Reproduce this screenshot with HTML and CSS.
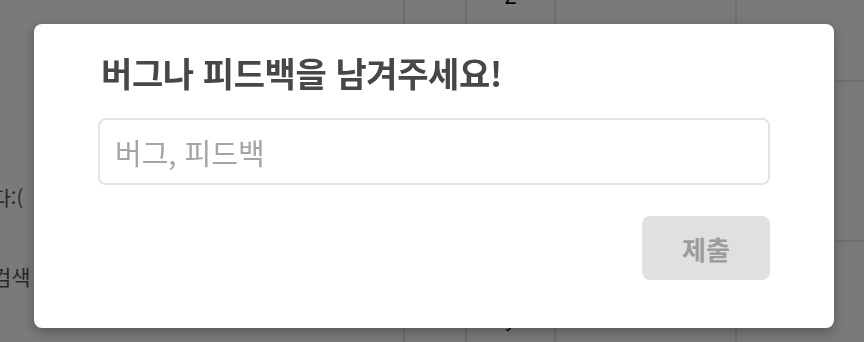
FILE: index.html
```html
<!DOCTYPE html>
<html lang="ko">
<head>
<meta charset="utf-8">
<link rel="stylesheet" href="styles.css">
</head>
<body>
<div class="page">
  <div class="side">
    <p class="side-line side-a">니다:(</p>
    <p class="side-line side-b">검색</p>
  </div>
  <div class="table">
    <div class="row row-top">
      <div class="cell c1"></div>
      <div class="cell c2"><span class="num">2</span></div>
      <div class="cell c3"></div>
      <div class="cell c4"></div>
    </div>
    <div class="row row-mid">
      <div class="cell c1"></div>
      <div class="cell c2"></div>
      <div class="cell c3"></div>
      <div class="cell c4"></div>
    </div>
    <div class="row row-bot">
      <div class="cell c1"></div>
      <div class="cell c2"><span class="dot">y</span></div>
      <div class="cell c3"></div>
      <div class="cell c4"></div>
    </div>
  </div>
</div>

<div class="overlay">
  <div class="modal">
    <h2 class="modal-title">버그나 피드백을 남겨주세요!</h2>
    <input class="feedback-input" type="text" placeholder="버그, 피드백">
    <div class="actions">
      <button class="submit" type="button">제출</button>
    </div>
  </div>
</div>
</body>
</html>
```

FILE: styles.css
```css
* { box-sizing: border-box; }
html, body { margin: 0; padding: 0; }
body {
  width: 864px;
  height: 342px;
  overflow: hidden;
  background: #ffffff;
  font-family: "Noto Sans CJK KR", "Noto Sans", sans-serif;
}

.page {
  display: flex;
  height: 342px;
}
.side {
  width: 429px;
  flex-shrink: 0;
  display: flex;
  flex-direction: column;
  margin-left: -26px;
}
.side-line {
  margin: 0;
  color: #555;
  font-size: 20px;
  line-height: 28px;
}
.side-a { margin-top: 184px; }
.side-b {
  margin-top: 50px;
  padding-left: 18px;
  font-size: 21px;
}

.table {
  flex: 1;
  display: flex;
  flex-direction: column;
}
.row {
  display: flex;
  border-bottom: 2px solid #e6e6e6;
}
.row-top { height: 82px; }
.row-mid { height: 160px; }
.row-bot { height: 100px; border-bottom: 0; }
.cell {
  border-left: 2px solid #e6e6e6;
  display: flex;
  justify-content: center;
}
.c1 { width: 62px; }
.c2 { width: 89px; }
.c3 { width: 181px; }
.c4 { flex: 1; }
.num {
  font-family: "Liberation Sans", sans-serif;
  font-size: 22px;
  color: #000;
  margin-top: -15px;
  line-height: 24px;
}
.dot {
  font-family: "Liberation Sans", sans-serif;
  font-size: 20px;
  color: #000;
  margin-top: 68px;
  line-height: 20px;
}

.overlay {
  position: fixed;
  inset: 0;
  background: rgba(0, 0, 0, 0.52);
  display: flex;
  align-items: flex-start;
  justify-content: flex-start;
  padding: 24px 0 0 34px;
}
.modal {
  width: 800px;
  height: 304px;
  background: #ffffff;
  border-radius: 8px;
  box-shadow: 0 4px 14px rgba(0, 0, 0, 0.3);
  padding: 24px 64px 48px;
  display: flex;
  flex-direction: column;
}
.modal-title {
  margin: 0 0 0 3px;
  font-size: 34px;
  line-height: 50px;
  font-weight: 700;
  color: #474747;
  letter-spacing: -0.4px;
}
.feedback-input {
  margin-top: 20px;
  width: 672px;
  height: 67px;
  border: 2px solid #e2e2e4;
  border-radius: 8px;
  padding: 0 15px;
  font-family: "Noto Sans CJK KR", "Noto Sans", sans-serif;
  font-size: 29px;
  color: #333;
  outline: none;
}
.feedback-input::placeholder {
  color: #a4a4a4;
  font-weight: 400;
}
.actions {
  margin-top: 31px;
  display: flex;
  justify-content: flex-end;
}
.submit {
  width: 128px;
  height: 64px;
  border: 0;
  border-radius: 8px;
  background: #e0e0e0;
  color: #9c9c9c;
  font-family: "Noto Sans CJK KR", "Noto Sans", sans-serif;
  font-size: 26px;
  font-weight: 700;
  padding: 0;
}
```
